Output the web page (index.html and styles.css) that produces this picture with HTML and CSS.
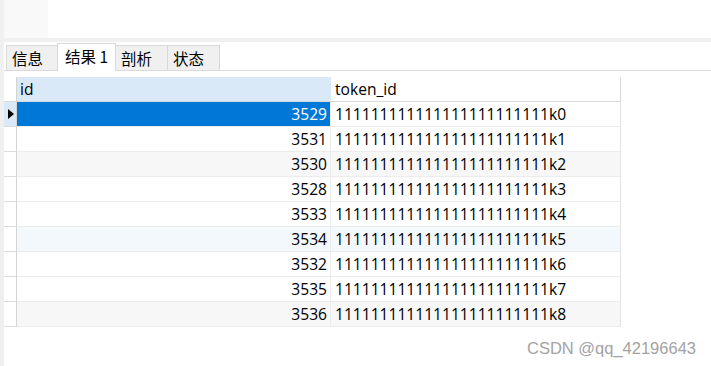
FILE: index.html
```html
<!DOCTYPE html>
<html>
<head>
<meta charset="utf-8">
<link rel="stylesheet" href="styles.css">
</head>
<body>
<div class="app">
  <div class="top"><div class="top-side"></div></div>
  <div class="sep"></div>
  <div class="tabbar">
    <div class="tab">信息</div>
    <div class="tab active">结果 1</div>
    <div class="tab">剖析</div>
    <div class="tab">状态</div>
  </div>
  <div class="grid">
    <div class="row head">
      <div class="sel"></div>
      <div class="cell hid">id</div>
      <div class="cell tok">token_id</div>
    </div>
    <div class="row current">
      <div class="sel"><span class="arrow"></span></div>
      <div class="cell num">3529</div>
      <div class="cell tok">111111111111111111111111k0</div>
    </div>
    <div class="row">
      <div class="sel"></div>
      <div class="cell num">3531</div>
      <div class="cell tok">111111111111111111111111k1</div>
    </div>
    <div class="row alt">
      <div class="sel"></div>
      <div class="cell num">3530</div>
      <div class="cell tok">111111111111111111111111k2</div>
    </div>
    <div class="row">
      <div class="sel"></div>
      <div class="cell num">3528</div>
      <div class="cell tok">111111111111111111111111k3</div>
    </div>
    <div class="row">
      <div class="sel"></div>
      <div class="cell num">3533</div>
      <div class="cell tok">111111111111111111111111k4</div>
    </div>
    <div class="row hover">
      <div class="sel"></div>
      <div class="cell num">3534</div>
      <div class="cell tok">111111111111111111111111k5</div>
    </div>
    <div class="row">
      <div class="sel"></div>
      <div class="cell num">3532</div>
      <div class="cell tok">111111111111111111111111k6</div>
    </div>
    <div class="row">
      <div class="sel"></div>
      <div class="cell num">3535</div>
      <div class="cell tok">111111111111111111111111k7</div>
    </div>
    <div class="row alt">
      <div class="sel"></div>
      <div class="cell num">3536</div>
      <div class="cell tok">111111111111111111111111k8</div>
    </div>
  </div>
  <div class="watermark">CSDN @qq_42196643</div>
</div>
</body>
</html>
```

FILE: styles.css
```css
body {
  margin: 0;
  background: #fff;
  font-family: "Open Sans", "Noto Sans CJK SC", sans-serif;
  color: #000;
}
.app {
  position: relative;
  width: 707px;
  height: 366px;
  border-left: 4px solid #f0f0f0;
  display: flex;
  flex-direction: column;
}
.top {
  height: 38px;
  display: flex;
}
.top-side {
  width: 44px;
  background: #f9f9f9;
}
.sep {
  height: 4px;
  background: #f0f0f0;
}
.tabbar {
  height: 28px;
  display: flex;
  align-items: flex-end;
  padding-left: 2px;
  border-bottom: 1px solid #dadada;
}
.tab {
  box-sizing: border-box;
  width: 52px;
  height: 25px;
  border: 1px solid #d9d9d9;
  border-bottom: none;
  background: #f0f0f0;
  padding-left: 5px;
  font-family: "Noto Sans CJK SC", sans-serif;
  font-size: 15.5px;
  line-height: 25px;
}
.tab + .tab {
  margin-left: -1px;
  width: 53px;
}
.tab.active {
  width: 59px;
  height: 28px;
  margin-bottom: -1px;
  background: #fff;
  padding-left: 7px;
  line-height: 25px;
  position: relative;
  z-index: 1;
}
.grid {
  margin-top: 6px;
  display: flex;
  flex-direction: column;
}
.row {
  display: grid;
  grid-template-columns: 13px 314px 290px;
  height: 25px;
}
.sel {
  box-sizing: border-box;
  border-right: 1px solid #d4d4d4;
  border-bottom: 1px solid #dcdcdc;
  background: #fff;
  display: flex;
  align-items: center;
  justify-content: center;
}
.head .sel {
  border-bottom: 1px solid #d9d9d9;
}
.cell {
  box-sizing: border-box;
  border-bottom: 1px solid #ececec;
  font-size: 15.6px;
  line-height: 24px;
  white-space: nowrap;
  overflow: hidden;
}
.cell.num {
  text-align: right;
  padding-right: 3px;
  border-right: 1px solid #ececec;
}
.cell.tok {
  padding-left: 4px;
  border-right: 1px solid #e4e4e4;
}
.head .cell {
  border-bottom: 1px solid #d9d9d9;
}
.head .hid {
  background: #dae9f7;
  padding-left: 3px;
}
.head .tok {
  border-right: 1px solid #d9d9d9;
}
.current .sel {
  background: #dae9f7;
}
.current .num {
  background: #0078d7;
  color: #fff;
}
.arrow {
  width: 0;
  height: 0;
  border-top: 5px solid transparent;
  border-bottom: 5px solid transparent;
  border-left: 6px solid #000;
  margin-left: 1px;
}
.alt .cell {
  background: #f7f7f7;
}
.hover .cell {
  background: #f3f8fd;
}
.watermark {
  position: absolute;
  right: 15px;
  top: 338px;
  font-family: "Liberation Sans", Arial, sans-serif;
  font-size: 16.5px;
  color: #a3a3a3;
  line-height: 20px;
}
```
